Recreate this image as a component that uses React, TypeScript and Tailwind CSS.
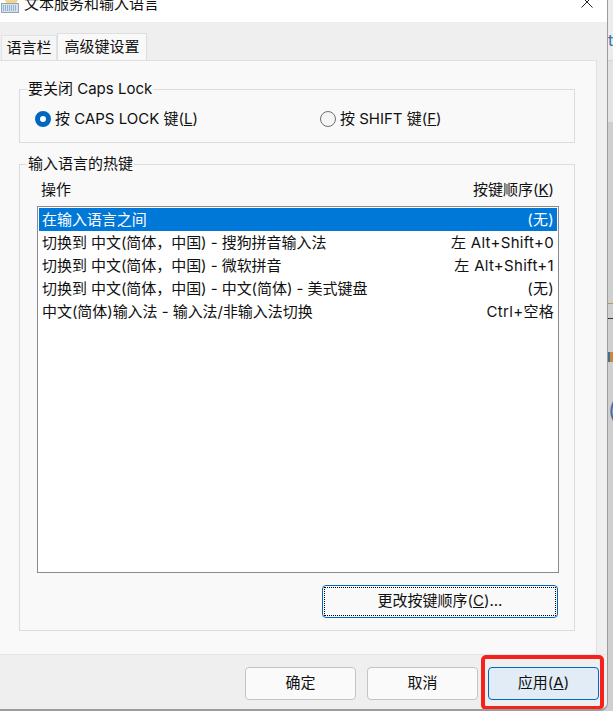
const font = '[font-family:"Inter","Noto_Sans_CJK_SC",sans-serif]'

const rows = [
  ['在输入语言之间', '(无)'],
  ['切换到 中文(简体，中国) - 搜狗拼音输入法', '左 Alt+Shift+0'],
  ['切换到 中文(简体，中国) - 微软拼音', '左 Alt+Shift+1'],
  ['切换到 中文(简体，中国) - 中文(简体) - 美式键盘', '(无)'],
  ['中文(简体)输入法 - 输入法/非输入法切换', 'Ctrl+空格'],
]

function KeyboardIcon() {
  return (
    <svg width="19" height="14" viewBox="0 0 19 14" className="shrink-0">
      <path d="M4 0h13l-2 4H6z" fill="#f3d68c" />
      <rect x="0.5" y="3.5" width="17" height="9" fill="#d5e2ee" stroke="#8fa6bb" />
      <path d="M2 6h14M2 8h14M2 10h14" stroke="#5a86ad" strokeDasharray="1 1" />
    </svg>
  )
}

function Radio({ checked }: { checked?: boolean }) {
  if (checked) {
    return <span className="w-4 h-4 rounded-full border-[5px] border-[#0067c0] bg-white shrink-0" />
  }
  return <span className="w-4 h-4 rounded-full border border-[#707070] bg-[#f5f5f5] shrink-0" />
}

function DialogButton({ children, active }: { children: React.ReactNode; active?: boolean }) {
  return (
    <button
      className={
        active
          ? 'w-[111px] h-[33px] rounded-[4px] border border-[#0067c0] bg-[#e1ecf6] text-[#111]'
          : 'w-[111px] h-[33px] rounded-[4px] border border-[#c4c4c4] bg-[#fafafa] text-[#111]'
      }
    >
      {children}
    </button>
  )
}

export default function App() {
  return (
    <div className={`${font} w-[613px] h-[711px] flex overflow-hidden bg-[#d0d0d0] text-[15px] text-[#111]`}>
      <div className="w-[608px] h-[711px] flex flex-col shrink-0 overflow-hidden rounded-br-[8px] border-b-2 border-r border-[#9c9c9c]">
        {/* title bar, cut off by the screenshot */}
        <div className="h-[22px] shrink-0 bg-white flex items-start pl-[1px] pr-[14px] overflow-hidden">
          <KeyboardIcon />
          <span className="ml-[4px] -mt-[6px] leading-[20px]">文本服务和输入语言</span>
          <svg width="12" height="12" viewBox="0 0 12 12" className="ml-auto -mt-[4px]">
            <path d="M.5.5l11 11M11.5.5l-11 11" stroke="#222" strokeWidth="1" />
          </svg>
        </div>

        {/* tabs */}
        <div className="h-[38px] shrink-0 bg-[#efefef] flex items-end pl-[1px]">
          <div className="w-[56px] h-[25px] bg-[#f5f5f5] border border-b-0 border-[#e2e2e2] flex items-center justify-center">语言栏</div>
          <div className="w-[90px] h-[28px] -mb-[1px] bg-[#f9f9f9] border border-b-0 border-[#dedede] flex items-center justify-center">高级键设置</div>
        </div>

        {/* panel */}
        <div className="flex-1 bg-[#efefef] flex flex-col min-h-0">
          <div className="w-[597px] h-[594px] shrink-0 bg-[#f9f9f9] border-t border-r border-[#e0e0e0] pt-[18px] pl-[19px] pr-[21px]">
            <fieldset className="h-[64px] border border-[#dcdcdc]">
              <legend className="ml-[7px] px-[1px] leading-[20px]">要关闭 Caps Lock</legend>
              <div className="h-[42px] pl-[15px] flex items-center pb-[2px]">
                <div className="flex items-center w-[285px] gap-[4px]">
                  <Radio checked />
                  <span>按 CAPS LOCK 键(<u>L</u>)</span>
                </div>
                <div className="flex items-center gap-[4px]">
                  <Radio />
                  <span>按 SHIFT 键(<u>F</u>)</span>
                </div>
              </div>
            </fieldset>

            <fieldset className="h-[477px] mt-[11px] border border-[#dcdcdc]">
              <legend className="ml-[7px] px-[1px] leading-[20px]">输入语言的热键</legend>
              <div className="px-[17px]">
                <div className="h-[32px] flex items-center justify-between pl-[4px] pr-[3px]">
                  <span>操作</span>
                  <span>按键顺序(<u>K</u>)</span>
                </div>
                <div className="h-[367px] -mr-[2px] border border-[#8a8a90] bg-white p-[1px]">
                  {rows.map(([name, keys], i) => (
                    <div
                      key={name}
                      className={
                        i === 0
                          ? 'h-[23px] flex items-center justify-between pl-[3px] pr-[3px] pt-[2px] bg-[#0078d7] text-white'
                          : 'h-[23px] flex items-center justify-between pl-[3px] pr-[3px] pt-[2px]'
                      }
                    >
                      <span className="tracking-[-0.05px]">{name}</span>
                      <span className="tracking-[0.3px]">{keys}</span>
                    </div>
                  ))}
                </div>
                <div className="flex justify-end -mr-[1px] mt-[12px]">
                  <button className="w-[236px] h-[33px] rounded-[4px] border border-[#0067c0] p-[1px]">
                    <span className="w-full h-full flex items-center justify-center border border-dotted border-black">
                      更改按键顺序(<u>C</u>)...
                    </span>
                  </button>
                </div>
              </div>
            </fieldset>
          </div>

          {/* footer buttons */}
          <div className="relative flex-1 border-t border-[#e6e6e6] flex items-start pl-[245px] pt-[12px] gap-[11px]">
            <DialogButton>确定</DialogButton>
            <DialogButton>取消</DialogButton>
            <div className="ml-[-1px]">
              <DialogButton active>应用(<u>A</u>)</DialogButton>
            </div>
            <div className="absolute left-[481px] top-0 w-[123px] h-[55px] rounded-[5px] border-[4px] border-[#f5221b]" />
          </div>
        </div>
      </div>

      {/* strip of what lies behind the dialog */}
      <div className="relative flex-1 flex flex-col overflow-hidden text-[16px] leading-[20px]">
        <div className="h-[60px] bg-[#ececec]" />
        <div className="h-[62px] bg-[#e3e3e3] border-t border-[#d6d6d6]" />
        <div className="flex-1 bg-[#cfcfcf]" />
        <div className="absolute left-0 top-[30px] flex">
          <span className="text-[#3b6ea5]">t</span>
          <span className="w-[3px] h-[12px] mt-[3px] bg-[#c8632a]" />
        </div>
        <span className="absolute left-0 top-[303px] w-[5px] h-[1px] bg-[#b89a50]" />
        <span className="absolute left-0 top-[318px] w-[5px] h-[1px] bg-[#333]" />
        <span className="absolute left-0 top-[352px] w-[2px] h-[10px] bg-[#4a6a90]" />
        <span className="absolute left-[2px] top-[352px] w-[3px] h-[10px] bg-[#c88a3a]" />
        <span className="absolute left-0 top-[400px] text-[22px] text-[#3b6ea5]">(</span>
      </div>
    </div>
  )
}
